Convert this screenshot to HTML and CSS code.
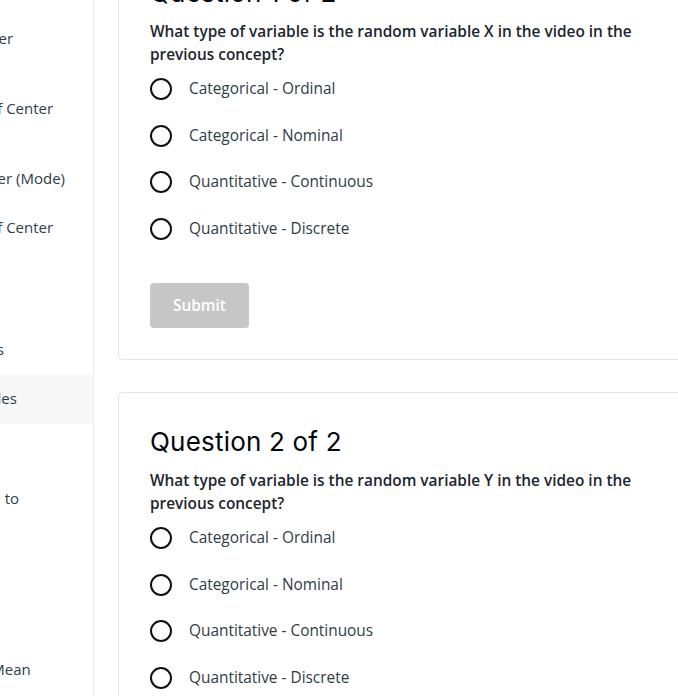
FILE: index.html
```html
<!DOCTYPE html>
<html lang="en">
<head>
<meta charset="utf-8">
<title>Quiz</title>
<link rel="stylesheet" href="styles.css">
</head>
<body>
<div class="layout">
  <nav class="sidebar">
    <div class="nav-list">
      <div class="nav-item lines-2"><span class="nav-text cut-er">Introduction to Number</span><span class="nav-text">&nbsp;</span></div>
      <div class="nav-item lines-2"><span class="nav-text cut-fc">Measures of Center</span><span class="nav-text">&nbsp;</span></div>
      <div class="nav-item"><span class="nav-text cut-mode">Measures of Center (Mode)</span></div>
      <div class="nav-item"><span class="nav-text cut-fc">Measures of Center</span></div>
      <div class="nav-item lines-2 pad-extra"><span class="nav-text">&nbsp;</span><span class="nav-text">&nbsp;</span></div>
      <div class="nav-item"><span class="nav-text cut-s">Random Variables</span></div>
      <div class="nav-item active"><span class="nav-text cut-es">Random Variables</span></div>
      <div class="nav-item pad-two"><span class="nav-text">&nbsp;</span></div>
      <div class="nav-item lines-3"><span class="nav-text cut-to">Introduction to</span><span class="nav-text">&nbsp;</span><span class="nav-text">&nbsp;</span></div>
      <div class="nav-item lines-2 pad-more"><span class="nav-text">&nbsp;</span><span class="nav-text">&nbsp;</span></div>
      <div class="nav-item"><span class="nav-text cut-mean">Notation for the Mean</span></div>
    </div>
  </nav>
  <main class="content">
    <section class="card first">
      <h2 class="q-title">Question 1 of 2</h2>
      <p class="q-text">What type of variable is the random variable X in the video in the previous concept?</p>
      <ul class="options">
        <li class="option"><span class="radio"></span><span class="opt-label">Categorical - Ordinal</span></li>
        <li class="option"><span class="radio"></span><span class="opt-label">Categorical - Nominal</span></li>
        <li class="option"><span class="radio"></span><span class="opt-label">Quantitative - Continuous</span></li>
        <li class="option"><span class="radio"></span><span class="opt-label">Quantitative - Discrete</span></li>
      </ul>
      <button class="submit" type="button" disabled>Submit</button>
    </section>
    <section class="card">
      <h2 class="q-title">Question 2 of 2</h2>
      <p class="q-text">What type of variable is the random variable Y in the video in the previous concept?</p>
      <ul class="options">
        <li class="option"><span class="radio"></span><span class="opt-label">Categorical - Ordinal</span></li>
        <li class="option"><span class="radio"></span><span class="opt-label">Categorical - Nominal</span></li>
        <li class="option"><span class="radio"></span><span class="opt-label">Quantitative - Continuous</span></li>
        <li class="option"><span class="radio"></span><span class="opt-label">Quantitative - Discrete</span></li>
      </ul>
      <button class="submit" type="button" disabled>Submit</button>
    </section>
  </main>
</div>
</body>
</html>
```

FILE: styles.css
```css
html, body {
  margin: 0;
  padding: 0;
  background: #ffffff;
  overflow: hidden;
  height: 696px;
}

body {
  font-family: "Open Sans", "Liberation Sans", sans-serif;
  color: #2e3d49;
}

.layout {
  display: flex;
  align-items: flex-start;
  height: 696px;
  overflow: hidden;
}

/* Sidebar */
.sidebar {
  flex: 0 0 93px;
  width: 93px;
  height: 696px;
  border-right: 1px solid #ededed;
  overflow: hidden;
}

.nav-list {
  display: flex;
  flex-direction: column;
  padding-top: 14px;
}

.nav-item {
  display: flex;
  flex-direction: column;
  padding: 14px 0;
  font-size: 15px;
  line-height: 21px;
  color: #2e3d49;
  white-space: nowrap;
}

.nav-item.pad-extra {
  padding-bottom: 17px;
}

.nav-item.pad-two {
  padding-bottom: 15px;
}

.nav-item.pad-more {
  padding-bottom: 24px;
}

.nav-item.active {
  background: #f7f7f7;
  padding: 14px 0 15px;
}

.nav-text {
  display: block;
}

.cut-er { margin-left: -154px; }
.cut-fc { margin-left: -84px; }
.cut-mode { margin-left: -125px; }
.cut-s { margin-left: -123px; }
.cut-es { margin-left: -110px; }
.cut-to { margin-left: -86px; }
.cut-mean { margin-left: -125px; }

/* Content */
.content {
  flex: 0 0 auto;
  padding-left: 24px;
  display: flex;
  flex-direction: column;
  gap: 32px;
}

.card {
  width: 540px;
  border: 1px solid #e4e4e4;
  border-radius: 4px;
  padding: 32px 32px 31px 31px;
  background: #fff;
}

.card.first {
  margin-top: -57px;
}

.card.first .submit {
  margin-top: 31px;
}

.q-title {
  margin: 0;
  font-family: "Inter", "DejaVu Sans", sans-serif;
  font-weight: 400;
  font-size: 26px;
  line-height: 34px;
  color: #02070d;
  letter-spacing: 0.2px;
}

.q-text {
  margin: 10px 0 0;
  font-size: 15.4px;
  font-weight: 600;
  line-height: 23px;
  color: #1c262f;
}

.options {
  list-style: none;
  margin: 0;
  padding: 0;
}

.option {
  display: flex;
  align-items: center;
  gap: 17px;
  padding: 12px 0;
  line-height: 22.5px;
  font-size: 15.4px;
  color: #2e3d49;
}

.radio {
  flex: 0 0 22px;
  width: 22px;
  height: 22px;
  box-sizing: border-box;
  border: 2px solid #111;
  border-radius: 50%;
}

.submit {
  margin-top: 32px;
  width: 99px;
  height: 45px;
  border: none;
  border-radius: 4px;
  background: #c6c6c6;
  color: #ffffff;
  font-family: "Open Sans", "Liberation Sans", sans-serif;
  font-size: 15.4px;
  font-weight: 600;
  padding: 0;
}
```
